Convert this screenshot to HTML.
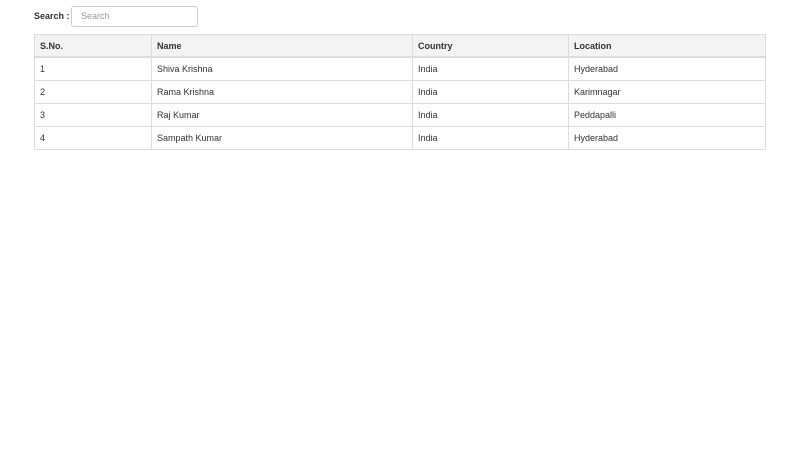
<!DOCTYPE html>
<html><head><style>
body{margin:0;background:#fff;font-family:"Liberation Sans",sans-serif;font-size:9px;color:#333}
.l{position:absolute;left:34px;top:11px;font-weight:bold;font-size:9px}
.i{position:absolute;left:71px;top:6px;width:116px;height:19px;border:1px solid #ccc;border-radius:3px;color:#999;line-height:19px;padding-left:9px}
table{position:absolute;left:34px;top:34px;width:732px;border-collapse:collapse}
td,th{border:1px solid #ddd;height:22px;padding:0 5px;text-align:left;vertical-align:middle}
th{background:#f3f3f3;font-weight:bold;border-bottom:2px solid #ddd;height:21px}
</style></head><body>
<div class="l">Search :</div><div class="i">Search</div>
<table>
<tr><th style="width:106px">S.No.</th><th style="width:250px">Name</th><th style="width:145px">Country</th><th>Location</th></tr>
<tr><td>1</td><td>Shiva Krishna</td><td>India</td><td>Hyderabad</td></tr>
<tr><td>2</td><td>Rama Krishna</td><td>India</td><td>Karimnagar</td></tr>
<tr><td>3</td><td>Raj Kumar</td><td>India</td><td>Peddapalli</td></tr>
<tr><td>4</td><td>Sampath Kumar</td><td>India</td><td>Hyderabad</td></tr>
</table>
</body></html>
